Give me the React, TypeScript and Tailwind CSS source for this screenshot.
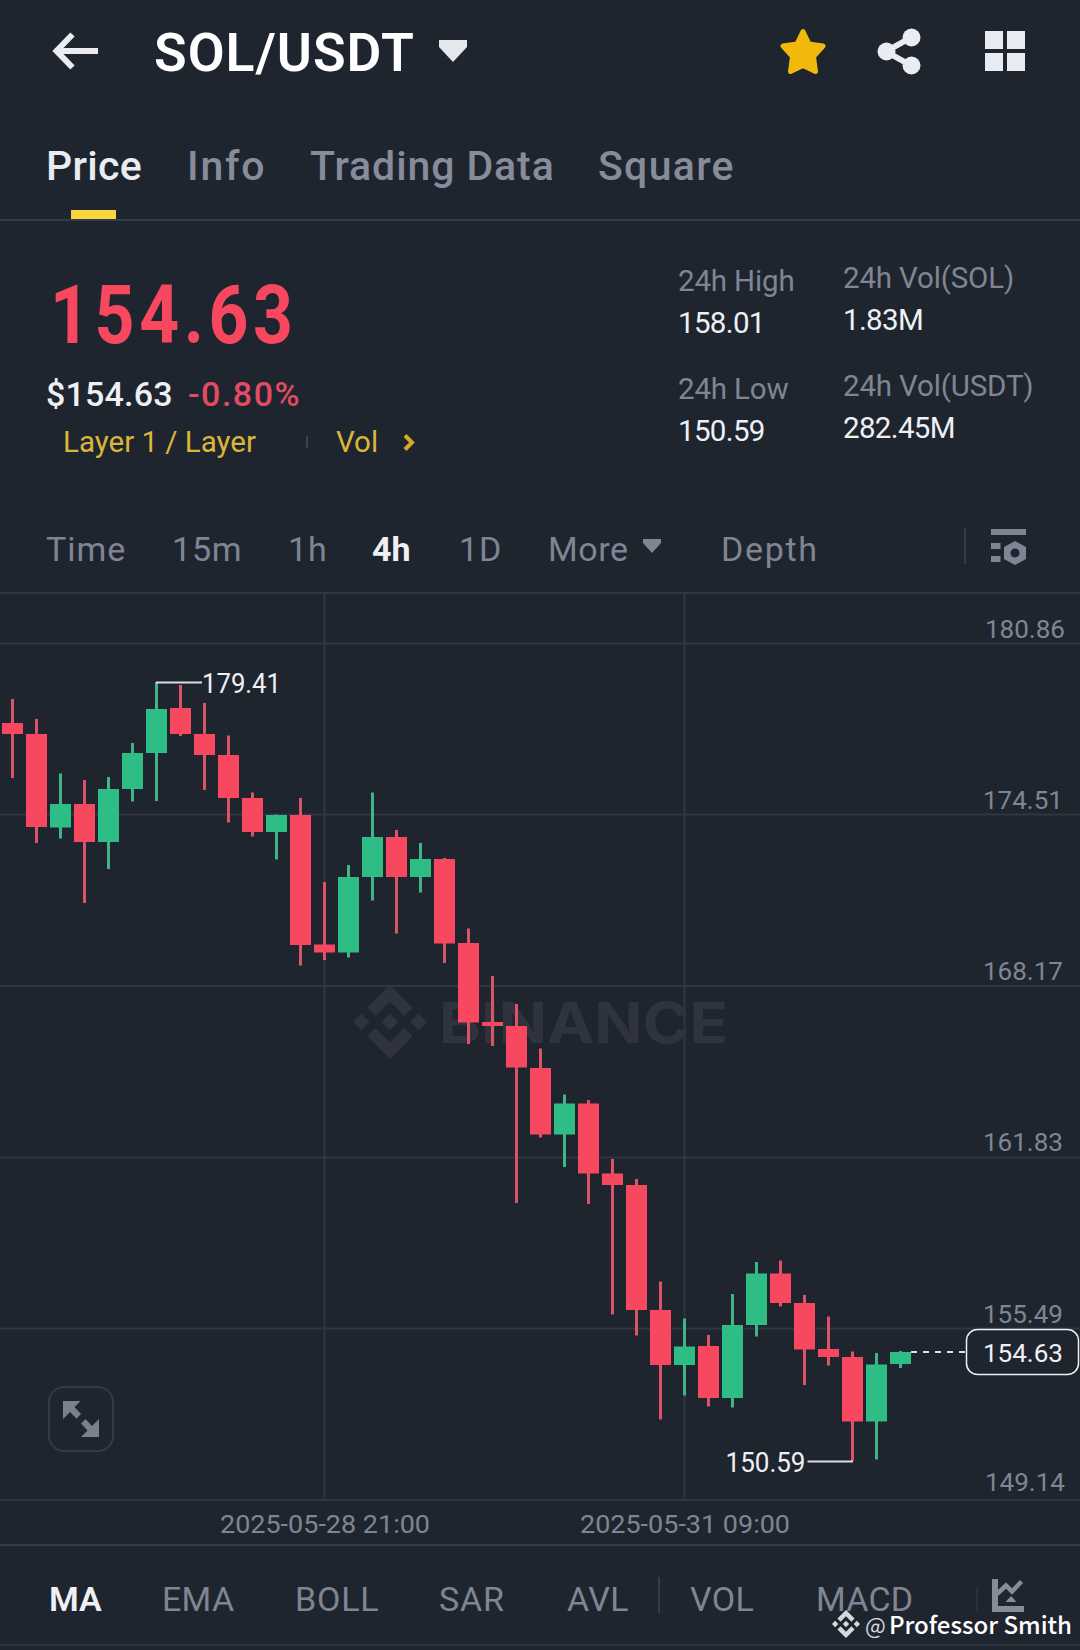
import clsx from "clsx";

type Candle = [high: number, top: number, bottom: number, low: number, up: 0 | 1];

// wick top, body top, body bottom, wick bottom, rising
const CANDLES: Candle[] = [
  [699, 723, 734, 778, 0],
  [719, 734, 827, 843, 0],
  [773.5, 804, 827.5, 838.5, 1],
  [780, 804, 842, 903, 0],
  [777, 789, 842, 869, 1],
  [743, 753, 789, 801.5, 1],
  [682, 709, 753, 801, 1],
  [685, 708, 734, 736, 0],
  [703, 734, 755, 790, 0],
  [735.5, 755, 798, 822.5, 0],
  [792.5, 798, 832, 836.5, 0],
  [814.5, 815, 832, 859.5, 1],
  [798, 815, 945, 965.5, 0],
  [882, 944.5, 952.5, 960, 0],
  [865, 877, 952.5, 957.5, 1],
  [792.5, 837, 877, 900.5, 1],
  [830, 837, 877, 933.5, 0],
  [843, 859, 877, 892.5, 1],
  [858, 859, 943.5, 963, 0],
  [928.5, 943, 1022.5, 1044, 0],
  [976, 1022, 1026, 1046, 0],
  [1004, 1026, 1067.5, 1203, 0],
  [1048.5, 1068, 1134.5, 1137.5, 0],
  [1094.5, 1103.5, 1134.5, 1167, 1],
  [1100, 1103.5, 1173.5, 1204, 0],
  [1159, 1173.5, 1185, 1314.5, 0],
  [1179, 1185, 1310, 1335.5, 0],
  [1281.5, 1310, 1365, 1419.5, 0],
  [1318.5, 1346.5, 1365, 1395.5, 1],
  [1335, 1346, 1398, 1406.5, 0],
  [1294, 1325, 1398, 1407.5, 1],
  [1262, 1273.5, 1325, 1336.5, 1],
  [1260.5, 1273.5, 1303, 1306.5, 0],
  [1295, 1303, 1349.5, 1385, 0],
  [1316.5, 1349, 1357, 1365.5, 0],
  [1351.5, 1357, 1421.5, 1461, 0],
  [1353, 1364.5, 1421.5, 1459.5, 1],
  [1351, 1352, 1364, 1368, 1],
];

const GRID_Y = [643.5, 814.5, 986, 1157.5, 1328.5, 1500];
const GRID_X = [324.5, 684.5];

const PRICE_LABELS = [
  { text: "180.86", x: 986, y: 638 },
  { text: "174.51", x: 984, y: 809 },
  { text: "168.17", x: 984, y: 980 },
  { text: "161.83", x: 984, y: 1151 },
  { text: "155.49", x: 984, y: 1322.5 },
  { text: "149.14", x: 986, y: 1490.5 },
];

const TABS = [
  { label: "Price", className: "w-[141px] tracking-[0.3px]" },
  { label: "Info", className: "w-[123px] tracking-[1.8px]" },
  { label: "Trading Data", className: "w-[288px] tracking-[0.9px]" },
  { label: "Square", className: "tracking-[1.3px]" },
];

const INTERVALS = [
  { label: "Time", className: "w-[126px] tracking-[1px]" },
  { label: "15m", className: "w-[116px] tracking-[0.8px]" },
  { label: "1h", className: "w-[84px] tracking-[0.8px]" },
  { label: "4h", className: "w-[87px]" },
  { label: "1D", className: "w-[89px] tracking-[0.8px]" },
];

const INDICATORS = [
  { label: "MA", className: "w-[113px]" },
  { label: "EMA", className: "w-[133px] tracking-[0.3px]" },
  { label: "BOLL", className: "w-[144px] tracking-[0.8px]" },
  { label: "SAR", className: "w-[128px] tracking-[0.8px]" },
  { label: "AVL", className: "w-[91px] tracking-[0.4px]" },
];

const BINANCE_PATH =
  "M16.624 13.9202l2.7175 2.7154-7.353 7.353-7.353-7.352 2.7175-2.7164 4.6355 4.6595 4.6356-4.6595zm4.6366-4.6366L24 12l-2.7154 2.7164L18.5682 12l2.6924-2.7164zm-9.272.001l2.7163 2.6914-2.7164 2.7174v-.001L9.2721 12l2.7164-2.7154zm-9.2722-.001L5.4088 12l-2.6914 2.6924L0 12l2.7164-2.7164zM11.9885.0115l7.353 7.329-2.7174 2.7154-4.6356-4.6356-4.6355 4.6595-2.7174-2.7154 7.353-7.353z";

function Header() {
  return (
    <header className="flex h-[102px] items-center pl-[52px] pr-[55px]">
      <svg width="46" height="38" viewBox="0 0 46 38" fill="none" stroke="#eaecf1" strokeWidth="6">
        <path d="M46 19H4M20.5 2.5L4.5 19l16 16.500" />
      </svg>
      <h1 className="ml-[56px] mt-[4px] w-[261px] whitespace-nowrap text-[53.5px] font-semibold leading-none tracking-[1px] text-white">
        SOL/USDT
      </h1>
      <svg className="ml-[24px]" width="28" height="22" viewBox="0 0 28 22" fill="#e4e7ec">
        <path d="M0 0h28v7L14 22 0 7z" />
      </svg>
      <div className="ml-auto flex items-center">
        <svg width="46" height="47" viewBox="0 0 46 47" fill="#f0b90b" stroke="#f0b90b" strokeWidth="5" strokeLinejoin="round">
          <path d="M23 3.500l6 12.500 14 2-9.500 10.500L35.500 43.500 23 37.500 10.500 43.500l2-15L3 18l14-2z" />
        </svg>
        <svg className="ml-[51px]" width="44" height="47" viewBox="0 0 44 47" fill="#eaecf1">
          <path d="M34 9.500L9 23.500l25 14" fill="none" stroke="#eaecf1" strokeWidth="6" />
          <circle cx="9.500" cy="23.500" r="9" />
          <circle cx="34.500" cy="9.500" r="9" />
          <circle cx="34.500" cy="37.500" r="9" />
        </svg>
        <div className="ml-[64px] grid grid-cols-2 gap-x-[4px] gap-y-[4px]">
          <i className="size-[18px] bg-[#e8ebf1]" />
          <i className="size-[18px] bg-[#e8ebf1]" />
          <i className="size-[18px] bg-[#e8ebf1]" />
          <i className="size-[18px] bg-[#e8ebf1]" />
        </div>
      </div>
    </header>
  );
}

function Tabs() {
  return (
    <nav className="relative flex h-[119px] border-b-2 border-[#353c47] pl-[46px] pt-[39px] text-[41px] font-medium leading-[50px]">
      {TABS.map((tab, i) => (
        <span key={tab.label} className={clsx("shrink-0 whitespace-nowrap", tab.className, i === 0 ? "text-[#eaecf1]" : "text-[#868c99]")}>
          {tab.label}
        </span>
      ))}
      <i className="absolute bottom-0 left-[71px] h-[9px] w-[45px] bg-[#fbd53d]" />
    </nav>
  );
}

function Stat({ label, value }: { label: string; value: string }) {
  return (
    <div className="whitespace-nowrap text-[29.5px] leading-[42px]">
      <div className="tracking-[-0.15px] text-[#7f8592]">{label}</div>
      <div className="tracking-[-0.65px] text-[#eef0f4]">{value}</div>
    </div>
  );
}

function Summary() {
  return (
    <section className="flex h-[287px]">
      <div className="w-[632px] shrink-0 pl-[46px] pt-[53px]">
        <div className="ml-[4px] origin-left scale-x-[0.85] text-[82px] font-bold leading-[82px] tracking-[5.4px] text-[#f8485f]">154.63</div>
        <div className="mt-[18px] flex text-[34px] leading-[40px]">
          <span className="w-[142px] font-medium tracking-[0.2px] text-[#eef0f4]">$154.63</span>
          <span className="font-medium tracking-[1.5px] text-[#e04c63]">-0.80%</span>
        </div>
        <div className="mt-[8px] flex items-center pl-[17px] text-[29.5px] leading-[40px] text-[#dcb53a]">
          <span className="w-[243px]">Layer 1 / Layer</span>
          <i className="h-[12px] w-[2px] bg-[#3b424d]" />
          <span className="ml-[28px] w-[67px]">Vol</span>
          <svg width="13" height="17" viewBox="0 0 13 17" fill="none" stroke="#d6a928" strokeWidth="4">
            <path d="M2 1.500l7 7-7 7" />
          </svg>
        </div>
      </div>
      <div className="flex w-[165px] shrink-0 flex-col gap-[24px] pl-[46px] pt-[39px]">
        <Stat label="24h High" value="158.01" />
        <Stat label="24h Low" value="150.59" />
      </div>
      <div className="flex flex-col gap-[24px] pl-[46px] pt-[36px]">
        <Stat label="24h Vol(SOL)" value="1.83M" />
        <Stat label="24h Vol(USDT)" value="282.45M" />
      </div>
    </section>
  );
}

function Intervals() {
  return (
    <nav className="flex h-[84px] items-center pb-[2px] pl-[46px] text-[34px] leading-none text-[#7f8592]">
      {INTERVALS.map(({ label, className }) => (
        <span key={label} className={clsx("shrink-0", className, label === "4h" && "font-bold text-[#eef0f4]")}>
          {label}
        </span>
      ))}
      <span className="w-[95px] tracking-[0.6px]">More</span>
      <svg width="18" height="14" viewBox="0 0 18 14" fill="#7f8592" className="-mt-[7px]">
        <path d="M0 0h18v4L9 14 0 4z" />
      </svg>
      <span className="ml-[60px] w-[243px] tracking-[1.7px]">Depth</span>
      <i className="-mt-[6px] h-[36px] w-[2px] bg-[#353c47]" />
      <svg className="-mt-[4px] ml-[25px]" width="36" height="37" viewBox="0 0 36 37" fill="#7f8592">
        <path d="M0 0h35v6H0zM0 14h9.500v6H0zM0 27h9.500v6H0z" />
        <path fillRule="evenodd" d="M24 12l11 6v12l-11 6-11-6V18zm0 7.500a4.500 4.500 0 1 0 0 9 4.500 4.500 0 0 0 0-9z" />
      </svg>
    </nav>
  );
}

function Chart() {
  return (
    <div className="relative h-[954px]">
      <svg width="1080" height="954" viewBox="0 592 1080 954" fontSize="26.500" className="block">
        <g stroke="#303640" strokeWidth="2">
          <path d="M0 593H1080" />
          {GRID_Y.map((y) => (
            <path key={y} d={`M0 ${y}H1080`} />
          ))}
          {GRID_X.map((x) => (
            <path key={x} d={`M${x} 593V1500`} />
          ))}
          <path d="M0 1545H1080" stroke="#353c47" />
        </g>

        {/* Watermark */}
        <g fill="#2f333e">
          <path d={BINANCE_PATH} transform="translate(353 985) scale(3.083)" />
          <text x="439" y="1043" fontSize="57" fontWeight="700" textLength="289" lengthAdjust="spacingAndGlyphs" className="font-['Inter',sans-serif]">
            BINANCE
          </text>
        </g>

        {CANDLES.map(([high, top, bottom, low, up], i) => {
          const x = 12.5 + i * 24;
          return (
            <g key={i}>
              <rect x={x - 1.5} y={high} width="3" height={low - high} fill={up ? "#3fb487" : "#dd5268"} />
              <rect x={x - 10.5} y={top} width="21" height={bottom - top} fill={up ? "#2ebd85" : "#f8485f"} />
            </g>
          );
        })}

        {/* High and low markers */}
        <g fill="#eef0f4" fontSize="27">
          <path d="M156 682.500H202M807.500 1461.500H853" stroke="#dcdfe4" strokeWidth="2" />
          <text x="202" y="693" textLength="79" lengthAdjust="spacingAndGlyphs">179.41</text>
          <text x="725.500" y="1471.500" textLength="80" lengthAdjust="spacingAndGlyphs">150.59</text>
        </g>

        <g fill="#7f8592">
          {PRICE_LABELS.map(({ text, x, y }) => (
            <text key={text} x={x - 1} y={y} textLength="80" lengthAdjust="spacingAndGlyphs">
              {text}
            </text>
          ))}
          <text x="220" y="1533" textLength="210" lengthAdjust="spacingAndGlyphs">2025-05-28 21:00</text>
          <text x="580" y="1533" textLength="210" lengthAdjust="spacingAndGlyphs">2025-05-31 09:00</text>
        </g>

        {/* Last price */}
        <path d="M911 1352H966" stroke="#dcdfe4" strokeWidth="2" strokeDasharray="6 6" />
        <rect x="966.500" y="1329.500" width="112" height="45" rx="11" fill="#1f252f" stroke="#eef0f4" strokeWidth="1.500" />
        <text x="983" y="1362" fill="#eef0f4" textLength="80" lengthAdjust="spacingAndGlyphs">154.63</text>
      </svg>

      <button className="absolute left-[48px] top-[794px] flex h-[66px] w-[66px] items-center justify-center rounded-[16px] border-[2.5px] border-[#353b46]">
        <svg width="36" height="36" viewBox="0 0 36 36" fill="#7a808e">
          <path d="M0 0h17.500l-6 6 6.500 7-4.500 4.500L7 11l-7 7z" />
          <path d="M36 36H18l6.500-6.500-6.500-7 4.500-4.500 6.500 7 7-7z" />
        </svg>
      </button>
    </div>
  );
}

function Indicators() {
  return (
    <nav className="relative flex h-[100px] items-center border-b-2 border-[#2f353f] pl-[49px] pt-[7px] text-[34px] leading-none text-[#7f8592]">
      {INDICATORS.map(({ label, className }, i) => (
        <span key={label} className={clsx("shrink-0", className, i === 0 && "font-semibold text-[#eef0f4]")}>
          {label}
        </span>
      ))}
      <i className="-mt-[7px] h-[36px] w-[2px] bg-[#353c47]" />
      <span className="ml-[30px] w-[126px] tracking-[0.4px]">VOL</span>
      <span className="w-[160px] tracking-[0.2px]">MACD</span>
      <i className="h-[24px] w-[2px] bg-[#2b313b]" />
      <svg className="-mt-[7px] ml-[14px]" width="32" height="33" viewBox="0 0 32 33" fill="#868c99">
        <path d="M0 0h6v27h26v6H0z" />
        <path d="M5 15l9-8.500 6 6L29.500 2.500" fill="none" stroke="#868c99" strokeWidth="4.500" />
        <path d="M19 17l5.500 6h-11z" />
      </svg>

      {/* Author tag */}
      <div className="absolute left-[832px] top-[60px] flex h-[36px] items-center whitespace-nowrap font-['Noto_Sans_CJK_SC',sans-serif] text-[24px] font-medium text-white">
        <svg width="28" height="28" viewBox="0 0 24 24" fill="#d5d8dc">
          <path d={BINANCE_PATH} />
        </svg>
        <span className="ml-[5px] w-[24px] text-[22px] font-normal text-[#d5d8dc]">@</span>
        <span>Professor Smith</span>
      </div>
    </nav>
  );
}

export default function App() {
  return (
    <div className="h-[1650px] w-[1080px] overflow-hidden bg-[#1f252f] font-['Roboto',sans-serif]">
      <Header />
      <Tabs />
      <Summary />
      <Intervals />
      <Chart />
      <Indicators />
    </div>
  );
}
